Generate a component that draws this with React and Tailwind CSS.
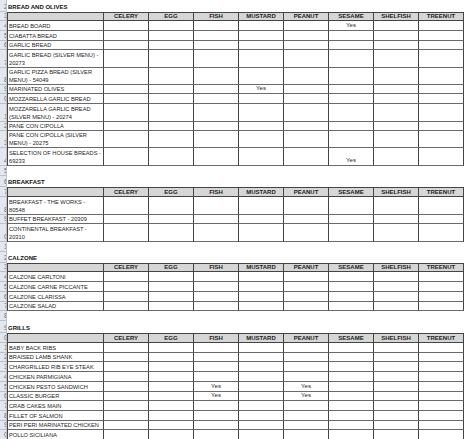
import React from 'react';

const COLS = ['CELERY', 'EGG', 'FISH', 'MUSTARD', 'PEANUT', 'SESAME', 'SHELFISH', 'TREENUT'];

// each item: lines of the name, row height, allergens marked Yes
const sections = [
  {
    title: 'BREAD AND OLIVES', titleH: 12, headH: 9, gapH: 10,
    items: [
      { name: ['BREAD BOARD'], h: 10, yes: ['SESAME'] },
      { name: ['CIABATTA BREAD'], h: 10 },
      { name: ['GARLIC BREAD'], h: 9 },
      { name: ['GARLIC BREAD (SILVER MENU) -', '20273'], h: 18 },
      { name: ['GARLIC PIZZA BREAD (SILVER', 'MENU) - 54049'], h: 17 },
      { name: ['MARINATED OLIVES'], h: 9, yes: ['MUSTARD'] },
      { name: ['MOZZARELLA GARLIC BREAD'], h: 10 },
      { name: ['MOZZARELLA GARLIC BREAD', '(SILVER MENU) - 20274'], h: 18 },
      { name: ['PANE CON CIPOLLA'], h: 9 },
      { name: ['PANE CON CIPOLLA (SILVER', 'MENU) - 20275'], h: 17 },
      { name: ['SELECTION OF HOUSE BREADS -', '69233'], h: 18, yes: ['SESAME'] },
    ],
  },
  {
    title: 'BREAKFAST', titleH: 11, headH: 10, gapH: 10,
    items: [
      { name: ['BREAKFAST - THE WORKS -', '80548'], h: 18 },
      { name: ['BUFFET BREAKFAST - 20309'], h: 9 },
      { name: ['CONTINENTAL BREAKFAST -', '20310'], h: 18 },
    ],
  },
  {
    title: 'CALZONE', titleH: 11, headH: 9, gapH: 10,
    items: [
      { name: ['CALZONE CARLTONI'], h: 10 },
      { name: ['CALZONE CARNE PICCANTE'], h: 10 },
      { name: ['CALZONE CLARISSA'], h: 10 },
      { name: ['CALZONE SALAD'], h: 9 },
    ],
  },
  {
    title: 'GRILLS', titleH: 12, headH: 10, gapH: 0,
    items: [
      { name: ['BABY BACK RIBS'], h: 10 },
      { name: ['BRAISED LAMB SHANK'], h: 9 },
      { name: ['CHARGRILLED RIB EYE STEAK'], h: 10 },
      { name: ['CHICKEN PARMIGIANA'], h: 10 },
      { name: ['CHICKEN PESTO SANDWICH'], h: 10, yes: ['FISH', 'PEANUT'] },
      { name: ['CLASSIC BURGER'], h: 9, yes: ['FISH', 'PEANUT'] },
      { name: ['CRAB CAKES MAIN'], h: 10 },
      { name: ['FILLET OF SALMON'], h: 10 },
      { name: ['PERI PERI MARINATED CHICKEN'], h: 9 },
      { name: ['POLLO SICILIANA'], h: 10 },
    ],
  },
];

const RowNum = ({ n }) => (
  <div className="w-[7px] shrink-0 self-stretch bg-[#e3e8ef] border-r border-b border-[#b9c1cc] overflow-hidden flex items-end justify-end">
    <span className="text-[7px] leading-[8px] text-[#5a6270] translate-x-[2px]">{n % 10}</span>
  </div>
);

const App = () => {
  let n = 2;
  const rows = [];

  sections.forEach((s, si) => {
    rows.push(
      <div key={`t${si}`} className="flex" style={{ height: s.titleH }}>
        <RowNum n={n++} />
        <div className="pl-[1px] flex items-end pb-[1px] font-bold text-[6px] leading-[7px] text-[#111]">{s.title}</div>
      </div>
    );
    rows.push(
      <div key={`h${si}`} className="flex" style={{ height: s.headH }}>
        <RowNum n={n++} />
        <div className="flex bg-[#d6d6d6] border-t border-l border-[#444]">
          <div className="w-[96px] border-r border-b border-[#444]" />
          {COLS.map(c => (
            <div key={c} className="w-[45px] border-r border-b border-[#444] flex items-center justify-center font-bold text-[6px] leading-[7px] text-[#222]">{c}</div>
          ))}
        </div>
      </div>
    );
    s.items.forEach((it, ii) => {
      rows.push(
        <div key={`r${si}-${ii}`} className="flex" style={{ height: it.h }}>
          <RowNum n={n++} />
          <div className="flex border-l border-[#444]">
            <div className="w-[96px] border-r border-b border-r-[#444] border-b-[#6a6a6a] pl-[1px] flex flex-col justify-center text-[5.7px] leading-[8px] text-[#1e1e1e] whitespace-nowrap overflow-hidden">
              {it.name.map(l => <span key={l}>{l}</span>)}
            </div>
            {COLS.map(c => (
              <div key={c} className="w-[45px] border-r border-b border-r-[#444] border-b-[#6a6a6a] flex items-end justify-center pb-[1px] text-[6px] leading-[7px] text-[#222]">
                {it.yes && it.yes.includes(c) ? 'Yes' : ''}
              </div>
            ))}
          </div>
        </div>
      );
    });
    if (s.gapH) {
      rows.push(
        <div key={`g${si}`} className="flex" style={{ height: s.gapH }}>
          <RowNum n={n++} />
        </div>
      );
    }
  });

  return (
    <div className="w-[474px] h-[439px] overflow-hidden bg-white" style={{ fontFamily: '"Liberation Sans", Arial, sans-serif' }}>
      {rows}
    </div>
  );
};

export default App;
